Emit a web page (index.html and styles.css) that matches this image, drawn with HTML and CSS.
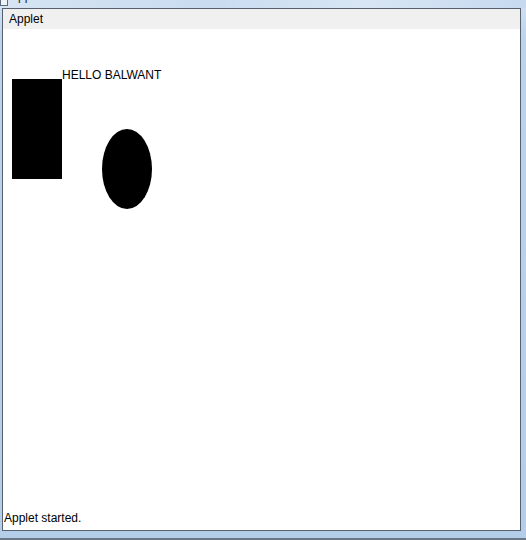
FILE: index.html
```html
<!DOCTYPE html>
<html>
<head>
<meta charset="utf-8">
<link rel="stylesheet" href="styles.css">
</head>
<body>
<div class="frame">
  <div class="titlebar">
    <span class="ticon"></span>
    <span class="ttext">Applet Viewer: Hello.class</span>
  </div>
  <div class="client">
    <div class="menubar"><span class="menu">Applet</span></div>
    <svg class="canvas" width="517" height="481" viewBox="1 0 517 481">
      <rect x="10" y="50" width="50" height="100" fill="#000"/>
      <text x="60" y="50" class="draw">HELLO BALWANT</text>
      <ellipse cx="125" cy="140" rx="25" ry="40" fill="#000"/>
    </svg>
    <div class="status">Applet started.</div>
  </div>
  <div class="shadow"></div>
</div>
</body>
</html>
```
FILE: styles.css
```css
html, body {
  margin: 0;
  padding: 0;
  background: #b9d1ea;
}
.frame {
  width: 526px;
  height: 540px;
  display: flex;
  flex-direction: column;
  background: linear-gradient(to bottom, #d3e2f2 0px, #bcd3ec 40px, #b4cde8 100%);
  overflow: hidden;
}
.titlebar {
  height: 8px;
  position: relative;
  overflow: hidden;
  background: linear-gradient(to right, #d6e4f3, #c9dcf0 40%, #d8e6f4 70%, #c6d9ef);
}
.ticon {
  position: absolute;
  left: 0;
  top: -4px;
  width: 6px;
  height: 8px;
  border: 1px solid #5d6b7a;
  background: #eef3f8;
}
.ttext {
  position: absolute;
  left: 10px;
  top: -11px;
  font: 12px "Liberation Sans", sans-serif;
  color: #1e1e1e;
}
.client {
  margin-left: 2px;
  width: 517px;
  height: 521px;
  border: 1px solid #56616d;
  background: #fff;
  display: flex;
  flex-direction: column;
}
.menubar {
  height: 20px;
  background: #f0f0f0;
  display: flex;
  align-items: center;
  font: 12px "Liberation Sans", sans-serif;
  color: #000;
}
.menu {
  padding-left: 6px;
}
.canvas {
  display: block;
  flex: none;
}
.draw {
  font: 12px "Liberation Sans", sans-serif;
  fill: #000;
}
.status {
  height: 20px;
  font: 12px "Liberation Sans", sans-serif;
  color: #000;
  padding-left: 1px;
  line-height: 16px;
  box-sizing: border-box;
}
.shadow {
  margin-top: auto;
  height: 2px;
  background: #6b7684;
}
```
